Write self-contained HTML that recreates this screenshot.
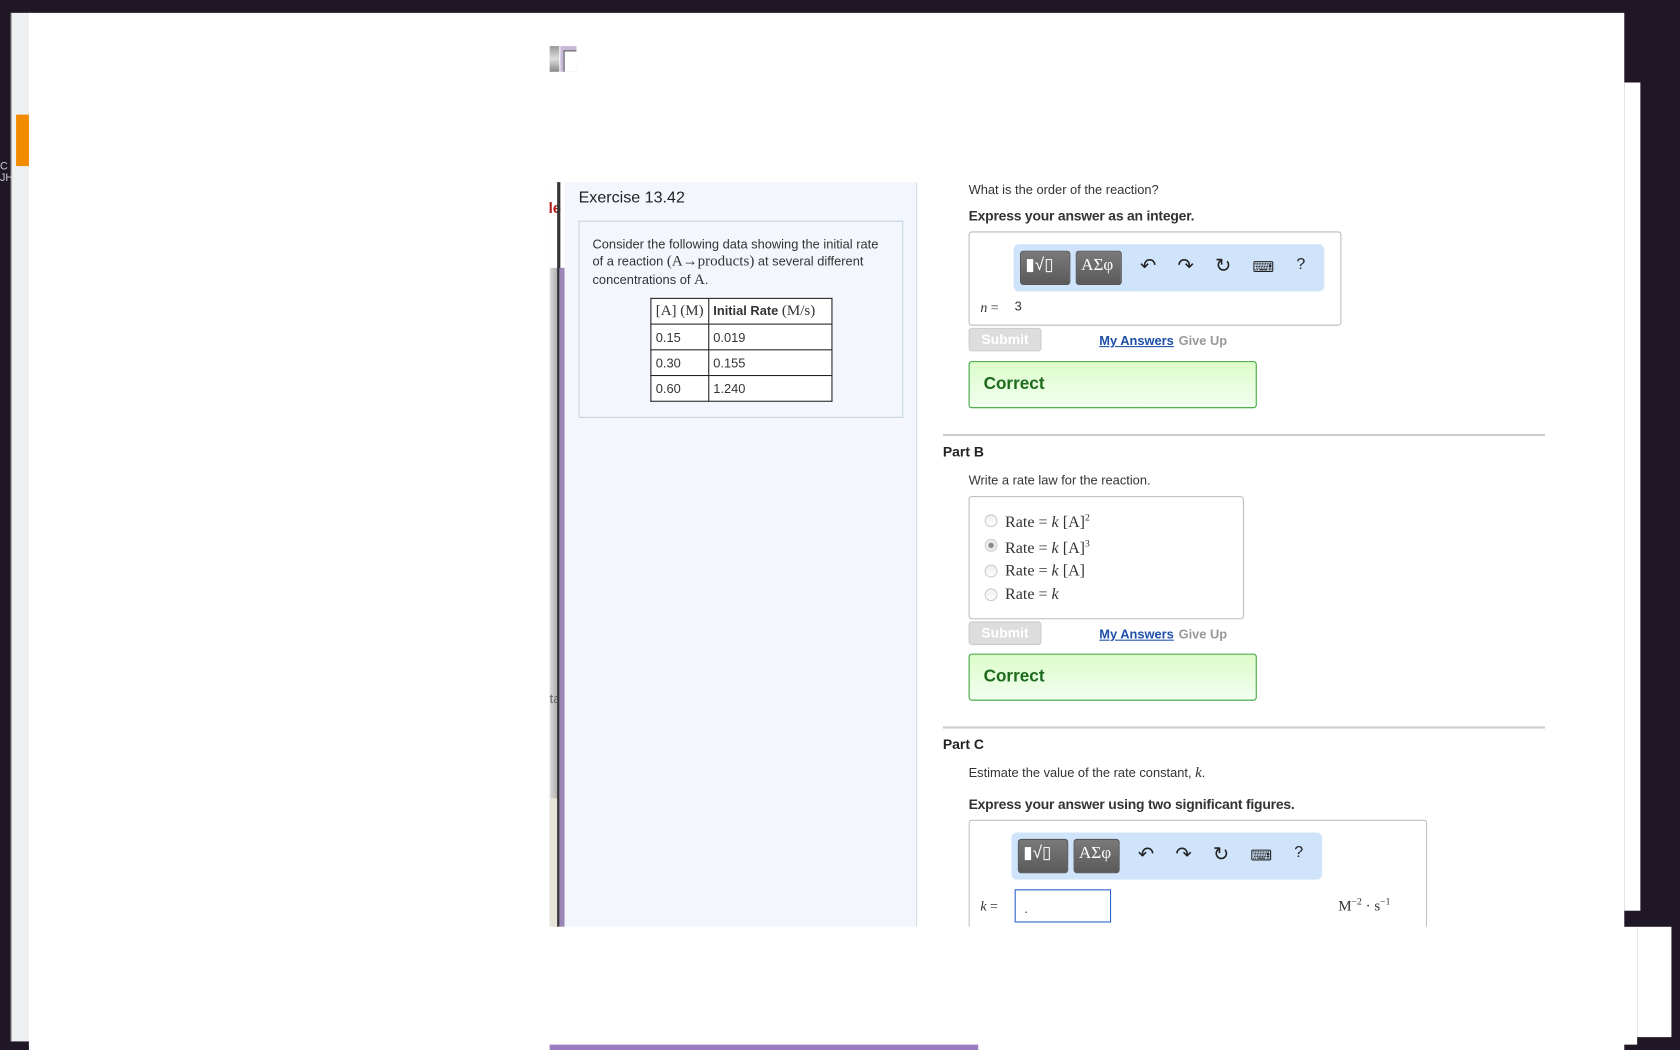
<!DOCTYPE html>
<html><head><meta charset="utf-8">
<style>
*{margin:0;padding:0;box-sizing:border-box}
html,body{width:1680px;height:1050px;overflow:hidden;background:#1f1626}
#w{position:absolute;left:0;top:0;width:1568px;height:980px;transform:scale(1.07143);transform-origin:0 0;font-family:"Liberation Sans",Arial,sans-serif;color:#333}
.a{position:absolute}
.serif{font-family:"Liberation Serif","DejaVu Serif",serif}
.tb{position:absolute;height:44px;background:#cfe4fb;border-radius:5px}
.btn{position:absolute;top:6px;height:32px;border-radius:3px;background:linear-gradient(#7a7a7a,#5a5a5a);border:1px solid #555;color:#fff}
.ic{position:absolute;top:10px;font-size:18px;color:#222}
.sub{position:absolute;width:68px;height:22px;background:#ddd;border:1px solid #ccc;border-radius:3px;color:#fff;font-weight:bold;font-size:13px;text-align:center;line-height:20px}
.my{position:absolute;font-size:12px;font-weight:bold;color:#1c4fa8;text-decoration:underline}
.gu{position:absolute;font-size:12px;font-weight:bold;color:#999}
.cor{position:absolute;width:269px;height:44px;border:1px solid #3aa53a;border-radius:3px;background:linear-gradient(#dcfcca,#f2fff0);color:#1d6a1d;font-weight:bold;font-size:16px;padding:12px 13px}
.hr{position:absolute;left:880px;width:562px;height:2px;background:#ccc}
.ph{position:absolute;left:880px;font-weight:bold;font-size:13px;color:#222}
.rad{position:absolute;width:12px;height:12px;border-radius:50%;border:1px solid #ccc;background:linear-gradient(#eee,#fff)}
.opt{position:absolute;left:938px;font-size:15px;color:#333}
td{border:1px solid #222;padding:2px 4px;font-size:12px;height:24px;white-space:nowrap}
</style></head><body><div id="w">
<div class="a" style="left:10px;top:12px;width:18px;height:960px;background:#eef0f2;border-left:1px solid #999"></div>
<div class="a" style="left:15px;top:107px;width:13px;height:48px;background:#f28a00"></div>
<div class="a" style="left:0;top:150px;font-size:10px;color:#ccc">C<br>JH</div>
<div class="a" style="left:27px;top:12px;width:1489px;height:968px;background:#fff"></div>
<div class="a" style="left:1516px;top:77px;width:15px;height:773px;background:#fff"></div>
<div class="a" style="left:1528px;top:865px;width:32px;height:103px;background:#fff"></div>
<div class="a" style="left:513px;top:43px;width:9px;height:24px;background:linear-gradient(#999,#ddd 50%,#888)"></div>
<div class="a" style="left:523px;top:43px;width:15px;height:24px;background:#c8b8d8"></div>
<div class="a" style="left:526px;top:47px;width:12px;height:20px;background:#fff;border-left:1px solid #555;border-top:1px solid #555"></div>
<div class="a" style="left:513px;top:170px;width:8px;height:695px;background:linear-gradient(90deg,#ddd,#aaa)"></div>
<div class="a" style="left:513px;top:170px;width:8px;height:80px;background:#fff"></div>
<div class="a" style="left:512px;top:186px;font-size:14px;font-weight:bold;color:#b01818">le</div>
<div class="a" style="left:513px;top:645px;font-size:12px;color:#666">ta</div>
<div class="a" style="left:513px;top:745px;width:8px;height:120px;background:#e8e4d8"></div>
<div class="a" style="left:520px;top:170px;width:3px;height:695px;background:#333"></div>
<div class="a" style="left:522px;top:250px;width:5px;height:615px;background:#9c86b8"></div>
<div class="a" style="left:527px;top:170px;width:329px;height:695px;background:#f3f7fd;border-right:1px solid #d5dce6"></div>
<div class="a" style="left:540px;top:176px;font-size:15px;color:#222">Exercise 13.42</div>
<div class="a" style="left:540px;top:206px;width:303px;height:184px;border:1px solid #c6d2e0"></div>
<div class="a" style="left:553px;top:220px;width:272px;font-size:12px;line-height:16px;color:#333">Consider the following data showing the initial rate of a reaction <span class="serif" style="font-size:14px">(A→products)</span> at several different concentrations of <span class="serif" style="font-size:14px">A</span>.</div>
<table class="a" style="left:607px;top:278px;border-collapse:collapse;background:#fff">
<tr><td class="serif" style="font-size:14px;width:52px">[A] (M)</td><td style="width:115px"><b>Initial Rate</b> <span class="serif" style="font-size:14px">(M/s)</span></td></tr>
<tr><td>0.15</td><td>0.019</td></tr>
<tr><td>0.30</td><td>0.155</td></tr>
<tr><td>0.60</td><td>1.240</td></tr>
</table>
<div class="a" style="left:904px;top:170px;font-size:12px">What is the order of the reaction?</div>
<div class="a" style="left:904px;top:194px;font-size:13px;font-weight:bold;letter-spacing:-0.2px">Express your answer as an integer.</div>
<div class="a" style="left:904px;top:216px;width:348px;height:88px;border:1px solid #bbb;border-radius:3px"></div>
<div class="tb" style="left:946px;top:228px;width:290px">
<div class="btn" style="left:6px;width:47px;font-size:16px;padding:2px 4px">▮√▯</div>
<div class="btn" style="left:58px;width:43px;font-size:16px;padding:4px 4px"><span class="serif">ΑΣφ</span></div>
<div class="ic" style="left:118px">↶</div><div class="ic" style="left:153px">↷</div><div class="ic" style="left:188px">↻</div><div class="ic" style="left:223px;font-size:14px;top:13px">⌨</div><div class="ic" style="left:264px;font-size:15px">?</div>
</div>
<div class="a serif" style="left:915px;top:279px;font-size:13px;font-style:italic">n <span style="font-style:normal">=</span></div>
<div class="a" style="left:947px;top:279px;font-size:12px">3</div>
<div class="sub" style="left:904px;top:306px">Submit</div>
<div class="my" style="left:1026px;top:311px">My Answers</div><div class="gu" style="left:1100px;top:311px">Give Up</div>
<div class="cor" style="left:904px;top:337px">Correct</div>
<div class="hr" style="top:405px"></div>
<div class="ph" style="top:414px">Part B</div>
<div class="a" style="left:904px;top:441px;font-size:12px">Write a rate law for the reaction.</div>
<div class="a" style="left:904px;top:463px;width:257px;height:115px;border:1px solid #bbb;border-radius:3px"></div>
<div class="rad" style="left:919px;top:480px"></div><div class="opt serif" style="top:478px">Rate = <i>k</i> [A]<sup style="font-size:9px">2</sup></div>
<div class="rad" style="left:919px;top:503px;background:radial-gradient(#888 2px,#eee 3px)"></div><div class="opt serif" style="top:502px">Rate = <i>k</i> [A]<sup style="font-size:9px">3</sup></div>
<div class="rad" style="left:919px;top:527px"></div><div class="opt serif" style="top:525px">Rate = <i>k</i> [A]</div>
<div class="rad" style="left:919px;top:549px"></div><div class="opt serif" style="top:547px">Rate = <i>k</i></div>
<div class="sub" style="left:904px;top:580px">Submit</div>
<div class="my" style="left:1026px;top:585px">My Answers</div><div class="gu" style="left:1100px;top:585px">Give Up</div>
<div class="cor" style="left:904px;top:610px">Correct</div>
<div class="hr" style="top:678px"></div>
<div class="ph" style="top:687px">Part C</div>
<div class="a" style="left:904px;top:714px;font-size:12px">Estimate the value of the rate constant, <i class="serif" style="font-size:14px">k</i>.</div>
<div class="a" style="left:904px;top:743px;font-size:13px;font-weight:bold;letter-spacing:-0.2px">Express your answer using two significant figures.</div>
<div class="a" style="left:904px;top:765px;width:428px;height:110px;border:1px solid #bbb;border-bottom:none;border-radius:3px 3px 0 0"></div>
<div class="a" style="left:27px;top:865px;width:1501px;height:110px;background:#fff"></div>
<div class="a" style="left:513px;top:975px;width:400px;height:5px;background:#9a7cc0"></div>
<div class="tb" style="left:944px;top:777px;width:290px">
<div class="btn" style="left:6px;width:47px;font-size:16px;padding:2px 4px">▮√▯</div>
<div class="btn" style="left:58px;width:43px;font-size:16px;padding:4px 4px"><span class="serif">ΑΣφ</span></div>
<div class="ic" style="left:118px">↶</div><div class="ic" style="left:153px">↷</div><div class="ic" style="left:188px">↻</div><div class="ic" style="left:223px;font-size:14px;top:13px">⌨</div><div class="ic" style="left:264px;font-size:15px">?</div>
</div>
<div class="a serif" style="left:915px;top:838px;font-size:13px;font-style:italic">k <span style="font-style:normal">=</span></div>
<div class="a" style="left:947px;top:830px;width:90px;height:31px;border:1px solid #2a5fc8;font-size:12px;padding:10px 8px">.</div>
<div class="a serif" style="left:1249px;top:836px;font-size:14px">M<sup style="font-size:9px">−2</sup> · s<sup style="font-size:9px">−1</sup></div>
</div></body></html>
